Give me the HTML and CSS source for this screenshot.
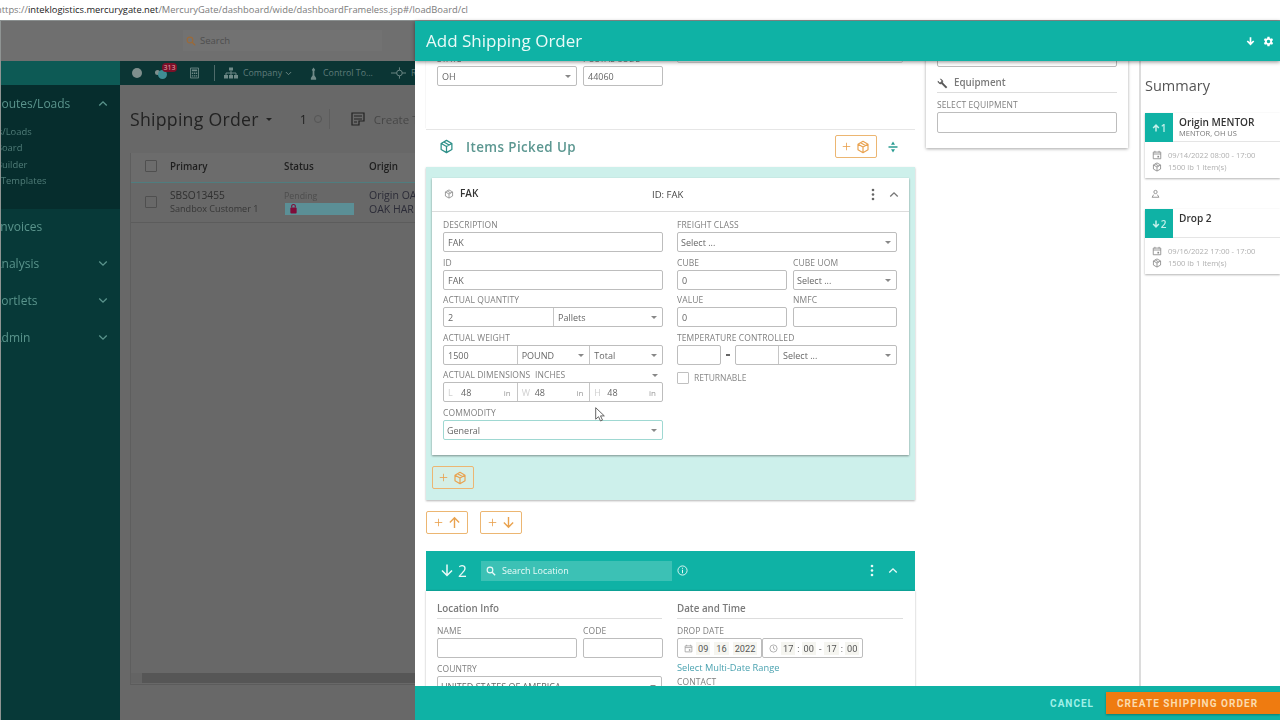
FILE: index.html
```html
<!DOCTYPE html>
<html lang="en">
<head>
  <meta charset="utf-8">
  <title>Add Shipping Order</title>
  <link rel="stylesheet" href="styles.css">
</head>
<body>
<svg class="defs" xmlns="http://www.w3.org/2000/svg">
  <symbol id="i-cube" viewBox="0 0 24 24"><path d="M12 2.2l8.6 4.9v9.8L12 21.8l-8.6-4.9V7.1z M3.6 7.2L12 12l8.4-4.8 M12 12v9.6 M7.8 4.7l8.4 4.9" fill="none" stroke="currentColor" stroke-width="2" stroke-linejoin="round"/></symbol>
  <symbol id="i-plus" viewBox="0 0 12 12"><path d="M6 1v10M1 6h10" fill="none" stroke="currentColor" stroke-width="1.1"/></symbol>
  <symbol id="i-up" viewBox="0 0 14 14"><path d="M7 13V2M2 7l5-5 5 5" fill="none" stroke="currentColor" stroke-width="1.5"/></symbol>
  <symbol id="i-down" viewBox="0 0 14 14"><path d="M7 1v11M2 7l5 5 5-5" fill="none" stroke="currentColor" stroke-width="1.5"/></symbol>
  <symbol id="i-up-bold" viewBox="0 0 14 14"><path d="M7 13V2M2 7l5-5 5 5" fill="none" stroke="currentColor" stroke-width="2.6"/></symbol>
  <symbol id="i-down-bold" viewBox="0 0 14 14"><path d="M7 1v11M2 7l5 5 5-5" fill="none" stroke="currentColor" stroke-width="2.6"/></symbol>
  <symbol id="i-chev-up" viewBox="0 0 12 8"><path d="M1.5 6.5L6 2l4.5 4.5" fill="none" stroke="currentColor" stroke-width="1.6"/></symbol>
  <symbol id="i-chev-down" viewBox="0 0 12 8"><path d="M1.5 1.5L6 6l4.5-4.5" fill="none" stroke="currentColor" stroke-width="1.6"/></symbol>
  <symbol id="i-dots" viewBox="0 0 4 16"><circle cx="2" cy="2.5" r="1.6" fill="currentColor"/><circle cx="2" cy="8" r="1.6" fill="currentColor"/><circle cx="2" cy="13.5" r="1.6" fill="currentColor"/></symbol>
  <symbol id="i-search" viewBox="0 0 12 12"><circle cx="4.8" cy="4.8" r="3.4" fill="none" stroke="currentColor" stroke-width="1.4"/><path d="M7.4 7.4L11 11" stroke="currentColor" stroke-width="1.6"/></symbol>
  <symbol id="i-info" viewBox="0 0 12 12"><circle cx="6" cy="6" r="5" fill="none" stroke="currentColor" stroke-width="1"/><path d="M6 5.2V9M6 3v1.2" stroke="currentColor" stroke-width="1.1"/></symbol>
  <symbol id="i-cal" viewBox="0 0 12 12"><path d="M1.5 2.5h9v8h-9z M1.5 4.8h9 M3.5 1v2 M8.5 1v2" fill="none" stroke="currentColor" stroke-width="1"/><rect x="6.5" y="7" width="2" height="2" fill="currentColor"/></symbol>
  <symbol id="i-clock" viewBox="0 0 12 12"><circle cx="6" cy="6" r="4.8" fill="none" stroke="currentColor"/><path d="M6 3v3.2l2.2 1.2" fill="none" stroke="currentColor"/></symbol>
  <symbol id="i-pin" viewBox="0 0 12 12"><circle cx="6" cy="4" r="2.2" fill="none" stroke="currentColor"/><path d="M3.5 7.5L1.5 11h9l-2-3.5" fill="none" stroke="currentColor"/></symbol>
  <symbol id="i-wrench" viewBox="0 0 12 12"><path d="M11 10L6.2 5.2c.5-1.5 0-3.6-2.6-4.2l1.6 2-.6 1.6-1.7.5L1 3.3c.2 2.6 2.4 3.6 4 3l4.600 4.700z" fill="currentColor" stroke="currentColor" stroke-width=".6"/></symbol>
  <symbol id="i-gear" viewBox="0 0 24 24"><path d="M19.4 13a7.600 7.600 0 0 0 0-2l2.100-1.600-2-3.500-2.500 1a7.500 7.500 0 0 0-1.700-1L15 3.300h-4l-.4 2.600a7.500 7.500 0 0 0-1.700 1l-2.500-1-2 3.500L6.500 11a7.600 7.600 0 0 0 0 2l-2.100 1.600 2 3.500 2.500-1a7.500 7.500 0 0 0 1.700 1l.4 2.600h4l.4-2.600a7.500 7.500 0 0 0 1.700-1l2.500 1 2-3.500zM13 15.200a3.200 3.200 0 1 1 0-6.400 3.200 3.200 0 0 1 0 6.400z" fill="currentColor" fill-rule="evenodd" transform="translate(-1 0)"/></symbol>
  <symbol id="i-expand" viewBox="0 0 10 12"><path d="M.5 6h9" stroke="currentColor" stroke-width="1.5"/><path d="M5 .5L3 3.800h4zM5 11.500L3 8.200h4z" fill="currentColor"/></symbol>
  <symbol id="i-org" viewBox="0 0 14 12"><path d="M5 .5h4v3H5zM0 8h4v3.500H0zM5 8h4v3.500H5zM10 8h4v3.500h-4z" fill="currentColor"/><path d="M7 3.500V8M2 8V6h10v2" fill="none" stroke="currentColor"/></symbol>
  <symbol id="i-tower" viewBox="0 0 8 14"><path d="M4 0l2 3-1 1v5l2 3v2H1v-2l2-3V4L2 3z" fill="currentColor"/></symbol>
  <symbol id="i-calc" viewBox="0 0 10 12"><path d="M.5.500h9v11h-9z" fill="none" stroke="currentColor"/><path d="M2 2h6v2H2zM2 5.500h1.500V7H2zM4.300 5.500h1.500V7H4.300zM6.500 5.500H8V7H6.500zM2 8.500h1.500V10H2zM4.300 8.500h1.500V10H4.300zM6.500 8.500H8V10H6.500z" fill="currentColor"/></symbol>
  <symbol id="i-net" viewBox="0 0 16 12"><circle cx="9" cy="6" r="3" fill="none" stroke="currentColor"/><path d="M0 6h6M12 6h4M9 0v3M9 9v3" stroke="currentColor"/></symbol>
  <symbol id="i-create" viewBox="0 0 14 14"><path d="M1 1h12v8H8v4H1z" fill="none" stroke="currentColor" stroke-width="1.2"/><path d="M3 4h8M3 7h8M3 10h3" stroke="currentColor"/></symbol>
  <symbol id="i-lock" viewBox="0 0 10 12"><path d="M3 5V3.500a2 2 0 0 1 4 0V5" fill="none" stroke="currentColor" stroke-width="1.200"/><rect x="1.500" y="5" width="7" height="6.500" rx="1" fill="currentColor"/></symbol>
  <symbol id="i-cursor" viewBox="0 0 10 15"><path d="M.7.700v11.500l2.800-2.500 2 4.300 2-.9-2-4.200h3.800z" fill="#fff" stroke="#555" stroke-width=".9"/></symbol>
</svg>

<div class="urlbar"><span class="url"><span class="url-rest">https://</span>inteklogistics.mercurygate.net<span class="url-rest">/MercuryGate/dashboard/wide/dashboardFrameless.jsp#/loadBoard/cl</span></span></div>

<div class="app">
  <div class="searchbar">
    <div class="searchbox"><svg class="ic-10 search-ic"><use href="#i-search"/></svg>Search</div>
  </div>
  <div class="side-cap"></div>
  <div class="nav">
    <span class="nav-dot"></span>
    <span class="nav-alert"><span class="nav-alert-dot"></span><span class="badge">313</span></span>
    <svg class="ic-calc"><use href="#i-calc"/></svg>
    <span class="nav-sep"></span>
    <svg class="ic-org"><use href="#i-org"/></svg><span class="nav-text">Company</span><svg class="ic-navchev"><use href="#i-chev-down"/></svg>
    <svg class="ic-tower"><use href="#i-tower"/></svg><span class="nav-text">Control To...</span>
    <svg class="ic-net"><use href="#i-net"/></svg><span class="nav-text">R</span>
  </div>
  <aside class="sidebar">
    <div class="side-open">
      <div class="side-item side-item-first">Routes/Loads<svg class="side-chev"><use href="#i-chev-up"/></svg></div>
      <div class="side-sub">Routes/Loads</div>
      <div class="side-sub">Load Board</div>
      <div class="side-sub">Load Builder</div>
      <div class="side-sub side-sub-last">Load Templates</div>
    </div>
    <div class="side-item side-invoices">Invoices</div>
    <div class="side-item">Analysis<svg class="side-chev"><use href="#i-chev-down"/></svg></div>
    <div class="side-item">Portlets<svg class="side-chev"><use href="#i-chev-down"/></svg></div>
    <div class="side-item">Admin<svg class="side-chev"><use href="#i-chev-down"/></svg></div>
  </aside>
  <main class="board">
    <div class="board-head">
      <h1 class="board-title">Shipping Order</h1>
      <span class="board-caret"></span>
      <span class="board-count">1</span>
      <span class="board-refresh"></span>
      <span class="board-sep"></span>
      <svg class="ic-create"><use href="#i-create"/></svg>
      <span class="board-create">Create T</span>
    </div>
    <div class="table">
      <div class="tr th">
        <span class="box"></span><span>Primary</span><span>Status</span><span>Origin</span>
      </div>
      <div class="tr td">
        <span class="box"></span>
        <div><div class="td-main">SBSO13455</div><div class="td-sub">Sandbox Customer 1</div></div>
        <div><div class="td-pending">Pending</div><div class="status-bar"><svg class="ic-lock"><use href="#i-lock"/></svg></div></div>
        <div class="td-origin"><div>Origin OA</div><div>OAK HAR</div></div>
      </div>
      <div class="hscroll"><span class="hscroll-arrow"></span><span class="hscroll-bar"></span></div>
    </div>
  </main>
</div>

<section class="drawer">
  <header class="drawer-head">
    <h2 class="drawer-title">Add Shipping Order</h2>
    <svg class="ic-head-down"><use href="#i-down-bold"/></svg>
    <svg class="ic-gear"><use href="#i-gear"/></svg>
  </header>

  <div class="drawer-main">
    <div class="form-pane">
      <div class="col-main">
        <div class="stop-top">
          <div class="two-col">
            <div class="pair">
              <div class="field"><label>STATE</label><div class="ctl">OH<i class="caret"></i></div></div>
              <div class="field"><label>POSTAL CODE</label><div class="ctl">44060</div></div>
            </div>
            <div class="clip-input"></div>
          </div>
        </div>

        <div class="items-head">
          <svg class="ic-items"><use href="#i-cube"/></svg>
          <h3 class="items-title">Items Picked Up</h3>
          <button class="add-btn add-btn-head"><svg class="ic-plus"><use href="#i-plus"/></svg><svg class="ic-addcube"><use href="#i-cube"/></svg></button>
          <svg class="ic-expand"><use href="#i-expand"/></svg>
        </div>

        <div class="items-body">
          <div class="item-card">
            <div class="item-head">
              <svg class="ic-itemcube"><use href="#i-cube"/></svg>
              <span class="item-name">FAK</span>
              <span class="item-id">ID: FAK</span>
              <svg class="ic-dots"><use href="#i-dots"/></svg>
              <svg class="ic-chev"><use href="#i-chev-up"/></svg>
            </div>
            <div class="item-form">
              <div class="item-col">
                <div class="field"><label>DESCRIPTION</label><div class="ctl">FAK</div></div>
                <div class="field"><label>ID</label><div class="ctl">FAK</div></div>
                <div class="field"><label>ACTUAL QUANTITY</label>
                  <div class="ctl-group"><div class="seg seg-half">2</div><div class="seg seg-half seg-sel">Pallets<i class="caret"></i></div></div>
                </div>
                <div class="field"><label>ACTUAL WEIGHT</label>
                  <div class="ctl-group"><div class="seg seg-third">1500</div><div class="seg seg-third seg-sel">POUND<i class="caret"></i></div><div class="seg seg-third seg-sel">Total<i class="caret"></i></div></div>
                </div>
                <div class="field"><label class="label-caret">ACTUAL DIMENSIONS&nbsp; INCHES<i class="caret"></i></label>
                  <div class="ctl-group">
                    <div class="seg seg-third seg-dim"><span class="dim-key">L</span>48<span class="dim-unit">in</span></div>
                    <div class="seg seg-third seg-dim"><span class="dim-key">W</span>48<span class="dim-unit">in</span></div>
                    <div class="seg seg-third seg-dim"><span class="dim-key">H</span>48<span class="dim-unit">in</span></div>
                  </div>
                </div>
                <div class="field"><label>COMMODITY</label><div class="ctl ctl-focus ctl-sel">General<i class="caret"></i></div></div>
              </div>
              <div class="item-col">
                <div class="field"><label>FREIGHT CLASS</label><div class="ctl ctl-sel">Select ...<i class="caret"></i></div></div>
                <div class="pair pair-item">
                  <div class="field"><label>CUBE</label><div class="ctl">0</div></div>
                  <div class="field"><label>CUBE UOM</label><div class="ctl ctl-sel">Select ...<i class="caret"></i></div></div>
                </div>
                <div class="pair pair-item">
                  <div class="field"><label>VALUE</label><div class="ctl">0</div></div>
                  <div class="field"><label>NMFC</label><div class="ctl"></div></div>
                </div>
                <div class="field"><label>TEMPERATURE CONTROLLED</label>
                  <div class="temp">
                    <div class="ctl temp-from"></div>
                    <span class="temp-dash"></span>
                    <div class="ctl-group temp-to"><div class="seg temp-val"></div><div class="seg seg-sel temp-unit">Select ...<i class="caret"></i></div></div>
                  </div>
                </div>
                <div class="check-row"><span class="box box-light"></span>RETURNABLE</div>
              </div>
            </div>
          </div>
          <button class="add-btn add-btn-item"><svg class="ic-plus"><use href="#i-plus"/></svg><svg class="ic-addcube"><use href="#i-cube"/></svg></button>
        </div>

        <div class="stop-actions">
          <button class="add-btn"><svg class="ic-plus"><use href="#i-plus"/></svg><svg class="ic-addarrow"><use href="#i-up"/></svg></button>
          <button class="add-btn"><svg class="ic-plus"><use href="#i-plus"/></svg><svg class="ic-addarrow"><use href="#i-down"/></svg></button>
        </div>

        <div class="stop-head">
          <svg class="ic-stop"><use href="#i-down"/></svg>
          <span class="stop-num">2</span>
          <div class="stop-search"><svg class="ic-stopsearch"><use href="#i-search"/></svg>Search Location</div>
          <svg class="ic-info"><use href="#i-info"/></svg>
          <svg class="ic-dots ic-dots-white"><use href="#i-dots"/></svg>
          <svg class="ic-chev ic-chev-white"><use href="#i-chev-up"/></svg>
        </div>
        <div class="stop-body">
          <div class="two-col">
            <div>
              <h4 class="sub-title">Location Info</h4>
              <div class="pair">
                <div class="field"><label>NAME</label><div class="ctl"></div></div>
                <div class="field"><label>CODE</label><div class="ctl"></div></div>
              </div>
              <div class="field"><label>COUNTRY</label><div class="ctl ctl-sel">UNITED STATES OF AMERICA<i class="caret"></i></div></div>
            </div>
            <div>
              <h4 class="sub-title">Date and Time</h4>
              <div class="field field-tight"><label>DROP DATE</label>
                <div class="datetime">
                  <div class="dt dt-date"><svg class="ic-dt"><use href="#i-cal"/></svg><span class="dt-part">09</span><span class="dt-part">16</span><span class="dt-part">2022</span></div>
                  <div class="dt dt-time"><svg class="ic-dt"><use href="#i-clock"/></svg><span class="dt-part">17</span>:<span class="dt-part">00</span><span class="dt-dash">-</span><span class="dt-part">17</span>:<span class="dt-part">00</span></div>
                </div>
              </div>
              <a class="multi-link">Select Multi-Date Range</a>
              <div class="field"><label>CONTACT</label></div>
            </div>
          </div>
        </div>
      </div>

      <div class="col-side">
        <div class="clip-input clip-input-side"></div>
        <h4 class="sub-title equip-title"><svg class="ic-wrench"><use href="#i-wrench"/></svg>Equipment</h4>
        <div class="field"><label>SELECT EQUIPMENT</label><div class="ctl ctl-tall"></div></div>
      </div>
    </div>

    <aside class="summary">
      <h3 class="summary-title">Summary</h3>
      <div class="sum-card">
        <div class="sum-head">
          <div class="sum-num"><svg class="ic-sum"><use href="#i-up-bold"/></svg>1</div>
          <div><div class="sum-name">Origin MENTOR</div><div class="sum-place">MENTOR, OH US</div></div>
        </div>
        <div class="sum-body">
          <div class="sum-row"><svg class="ic-sumrow"><use href="#i-cal"/></svg>09/14/2022 08:00 - 17:00</div>
          <div class="sum-row"><svg class="ic-sumrow"><use href="#i-cube"/></svg>1500 lb 1 Item(s)</div>
        </div>
      </div>
      <div class="sum-route"><svg class="ic-route"><use href="#i-pin"/></svg></div>
      <div class="sum-card">
        <div class="sum-head">
          <div class="sum-num"><svg class="ic-sum"><use href="#i-down-bold"/></svg>2</div>
          <div><div class="sum-name">Drop 2</div></div>
        </div>
        <div class="sum-body">
          <div class="sum-row"><svg class="ic-sumrow"><use href="#i-cal"/></svg>09/16/2022 17:00 - 17:00</div>
          <div class="sum-row"><svg class="ic-sumrow"><use href="#i-cube"/></svg>1500 lb 1 Item(s)</div>
        </div>
      </div>
    </aside>
  </div>

  <footer class="drawer-foot">
    <button class="btn-cancel">CANCEL</button>
    <button class="btn-create">CREATE SHIPPING ORDER</button>
  </footer>
</section>

<svg class="mouse"><use href="#i-cursor"/></svg>
</body>
</html>
```

FILE: styles.css
```css
html, body {
  margin: 0;
  padding: 0;
  width: 1280px;
  height: 720px;
  overflow: hidden;
}
body {
  position: relative;
  font-family: "Open Sans", sans-serif;
  background: #686868;
  color: #666;
  filter: blur(0.35px);
}
h1, h2, h3, h4 {
  margin: 0;
  font-weight: 400;
}
button {
  font-family: inherit;
  padding: 0;
  cursor: pointer;
}
svg {
  display: block;
  flex: none;
}
.defs {
  width: 0;
  height: 0;
  position: absolute;
}
.mouse {
  position: absolute;
  left: 595px;
  top: 407px;
  width: 10px;
  height: 15px;
}

/* browser bar */
.urlbar {
  height: 20px;
  background: #fff;
  border-bottom: 1px solid #8a8f8f;
  overflow: hidden;
  font-size: 9.35px;
  line-height: 20px;
  color: #222;
  white-space: nowrap;
}
.url {
  display: block;
  margin-left: -4px;
}
.url-rest {
  color: #7b7b7b;
}

/* page behind the drawer */
.app {
  display: grid;
  grid-template-columns: 119px 1fr;
  grid-template-rows: 40px 24px 1fr;
  height: 699px;
  border-left: 1px solid #8f9493;
}
.searchbar {
  grid-column: 1 / 3;
  background: #6f6f6f;
  padding: 9px 0 0 182px;
}
.searchbox {
  width: 199px;
  height: 21px;
  display: flex;
  align-items: center;
  gap: 4px;
  font-size: 9.5px;
  color: #4e4e4e;
  background: #727272;
}
.search-ic {
  color: #9a6a3a;
}
.ic-10 {
  width: 10px;
  height: 10px;
  margin-left: 3px;
}
.side-cap {
  background: #0d5a55;
}
.nav {
  background: #0b3534;
  display: flex;
  align-items: center;
  padding-left: 12px;
  color: #6f8a88;
  font-size: 8.8px;
  overflow: hidden;
  white-space: nowrap;
}
.nav-dot {
  width: 10px;
  height: 10px;
  border-radius: 50%;
  background: #7f8f8d;
  margin-right: 13px;
}
.nav-alert {
  position: relative;
  width: 14px;
  height: 12px;
  margin-right: 21px;
}
.nav-alert-dot {
  display: block;
  width: 9px;
  height: 9px;
  border-radius: 50%;
  background: #3f8d94;
  margin: 3px 0 0 3px;
  box-shadow: -5px -2px 0 -2px #7f8f8d;
}
.badge {
  position: absolute;
  left: 7px;
  top: -4px;
  width: 15px;
  height: 9px;
  border-radius: 4px;
  background: #7a1028;
  color: #e5a7b0;
  font-size: 7px;
  line-height: 9px;
  text-align: center;
}
.ic-calc {
  width: 9px;
  height: 12px;
  margin-right: 15px;
}
.nav-sep {
  width: 1px;
  height: 16px;
  background: #4e6b6a;
  margin-right: 9px;
}
.ic-org {
  width: 14px;
  height: 12px;
  margin-right: 5px;
}
.nav-text {
  color: #5f7c7a;
}
.ic-navchev {
  width: 7px;
  height: 5px;
  margin: 0 18px 0 3px;
}
.ic-tower {
  width: 7px;
  height: 13px;
  margin-right: 6px;
}
.ic-net {
  width: 15px;
  height: 12px;
  margin: 0 5px 0 18px;
}

.sidebar {
  background: #073938;
  overflow: hidden;
  color: #5a948c;
  font-size: 12px;
  position: relative;
}
.side-open {
  background: #062d2d;
  height: 123px;
  padding-top: 1px;
}
.side-item {
  display: flex;
  justify-content: space-between;
  align-items: center;
  height: 37px;
  margin-left: -7px;
  padding-right: 12px;
}
.side-item-first {
  height: 35px;
  margin-bottom: 3px;
}
.side-invoices {
  margin-left: -4px;
}
.side-open + .side-invoices {
  margin-top: -1px;
}
.side-chev {
  width: 10px;
  height: 7px;
}
.side-sub {
  font-size: 9.4px;
  line-height: 16.400px;
  color: #507c78;
  margin-left: -29px;
  white-space: nowrap;
}
.side-sub-last {
  margin-left: -24px;
}
.board {
  padding: 0 0 0 10px;
  overflow: hidden;
}
.board-head {
  display: flex;
  align-items: center;
  height: 24px;
  margin-top: 22px;
  color: #1f1f1f;
  white-space: nowrap;
}
.board-title {
  font-size: 17.700px;
  line-height: 24px;
  color: #222;
  letter-spacing: .25px;
}
.board-caret {
  border: 3px solid transparent;
  border-top: 3px solid #222;
  margin: 3px 0 0 7px;
}
.board-count {
  font-size: 12.500px;
  margin-left: 28px;
  color: #222;
}
.board-refresh {
  width: 6px;
  height: 6px;
  border: 1px solid #555;
  border-radius: 50%;
  margin-left: 7px;
}
.board-sep {
  width: 1px;
  height: 20px;
  background: #5d5d5d;
  margin-left: 7px;
}
.ic-create {
  width: 14px;
  height: 14px;
  margin-left: 21px;
  color: #222;
}
.board-create {
  font-size: 11.500px;
  margin-left: 9px;
  color: #474747;
}
.table {
  display: flex;
  flex-direction: column;
  height: 532px;
  margin-top: 22px;
  border-left: 1px solid #5e5e5e;
  border-bottom: 1px solid #5c5c5c;
  box-sizing: border-box;
}
.tr {
  display: grid;
  grid-template-columns: 39px 114px 85px 1fr;
  align-items: center;
}
.th {
  height: 26px;
  padding-bottom: 3px;
  background: #6c6c6c;
  border-bottom: 1px solid #4f7d7f;
  font-size: 9.800px;
  font-weight: 600;
  color: #1e1e1e;
}
.td {
  height: 38px;
  padding-bottom: 1px;
  border-bottom: 1px solid #5c5c5c;
  font-size: 10.200px;
  line-height: 14px;
}
.box {
  display: block;
  width: 10px;
  height: 10px;
  margin-left: 14px;
  border: 1px solid #4f4f4f;
  border-radius: 1px;
}
.td-main {
  color: #2f2f2f;
}
.td-sub {
  color: #363636;
  font-size: 9.100px;
}
.td-pending {
  color: #4d4d4d;
  font-size: 8.800px;
}
.status-bar {
  width: 69px;
  height: 12px;
  margin-left: 1px;
  background: #5b8f96;
  padding-left: 4px;
  box-sizing: border-box;
}
.ic-lock {
  width: 9px;
  height: 11px;
  color: #7f0c39;
}
.td-origin {
  color: #2b2b37;
  font-size: 10.500px;
}
.hscroll {
  display: flex;
  height: 10px;
  margin: auto 0 1px;
  background: #646464;
}
.hscroll-arrow {
  width: 11px;
}
.hscroll-bar {
  flex: 1;
  background: #565656;
}

/* drawer */
.drawer {
  position: absolute;
  left: 415px;
  top: 21px;
  right: 0;
  bottom: 0;
  display: flex;
  flex-direction: column;
  background: #fff;
}
.drawer-head {
  position: relative;
  z-index: 2;
  flex: none;
  height: 40px;
  display: flex;
  align-items: center;
  background: #0fb2a5;
  color: #fff;
  box-shadow: 0 1px 4px rgba(0, 0, 0, .45);
  padding: 0 5px 0 11px;
}
.drawer-title {
  flex: 1;
  margin-top: -2px;
  font-size: 17px;
  color: #eafaf8;
}
.ic-head-down {
  width: 9px;
  height: 10px;
  margin-right: 7px;
}
.ic-gear {
  width: 13px;
  height: 13px;
}
.drawer-main {
  flex: 1;
  min-height: 0;
  display: flex;
  overflow: hidden;
}
.form-pane {
  width: 724px;
  flex: none;
  display: flex;
  gap: 11px;
  padding: 0 0 0 11px;
  box-sizing: border-box;
  align-items: flex-start;
}
.col-main {
  width: 489px;
  flex: none;
  margin-top: -13px;
}
.col-side {
  width: 202px;
  flex: none;
  margin-top: -13px;
  padding: 0 11px 11px;
  box-sizing: border-box;
  background: #fff;
  box-shadow: 0 1px 3px rgba(0, 0, 0, .35);
}

/* form bits */
.field {
  margin-bottom: 3.600px;
}
.field label {
  display: block;
  height: 14px;
  font-size: 8.500px;
  line-height: 14px;
  color: #808080;
  letter-spacing: .1px;
  white-space: nowrap;
}
.ctl {
  position: relative;
  height: 20px;
  box-sizing: border-box;
  border: 1px solid #bdbdbd;
  border-radius: 2px;
  padding: 0 4px;
  font-size: 9px;
  line-height: 19px;
  color: #666;
  background: #fff;
  white-space: nowrap;
  overflow: hidden;
}
.ctl-sel {
  padding-left: 3px;
}
.ctl-focus {
  border-color: #9fd8d2;
}
.ctl-tall {
  height: 21px;
}
.caret {
  position: absolute;
  right: 5px;
  top: 8px;
  border: 3px solid transparent;
  border-top: 3px solid #888;
  border-bottom: 0;
}
.label-caret .caret {
  top: 6px;
}
.two-col {
  display: grid;
  grid-template-columns: 225px 226px;
  gap: 15px;
}
.pair {
  display: grid;
  grid-template-columns: 140px 80px;
  gap: 6px;
}
.stop-top {
  height: 77px;
  padding: 4px 12px 0 11px;
  background: #fff;
  box-shadow: -1px 0 1px -1px rgba(0, 0, 0, .2);
}
.clip-input {
  height: 11px;
  box-sizing: border-box;
  border: 1px solid #d5d5d5;
  border-radius: 2px;
}
.clip-input-side {
  height: 19px;
  border-color: #bbb;
}

/* items */
.items-head {
  height: 38px;
  display: flex;
  align-items: center;
  border-top: 1px solid #e6e6e6;
  box-sizing: border-box;
  padding: 0 17px 4px 13px;
}
.ic-items {
  width: 15px;
  height: 15px;
  color: #2d8f88;
}
.items-title {
  flex: 1;
  margin-left: 12px;
  font-size: 13.400px;
  font-weight: 600;
  letter-spacing: .4px;
  color: #5c9791;
}
.add-btn {
  display: flex;
  align-items: center;
  justify-content: center;
  gap: 5px;
  width: 42px;
  height: 23px;
  box-sizing: border-box;
  border: 1px solid #ecb672;
  border-radius: 2px;
  background: transparent;
  color: #e9a24f;
}
.add-btn-head {
  margin-right: 11px;
}
.add-btn-item {
  margin-top: 11px;
  background: #d5efe6;
}
.ic-plus {
  width: 9px;
  height: 9px;
}
.ic-addcube {
  width: 14px;
  height: 14px;
}
.ic-addarrow {
  width: 13px;
  height: 13px;
}
.ic-expand {
  width: 10px;
  height: 12px;
  color: #2a9c92;
}
.items-body {
  height: 333px;
  box-sizing: border-box;
  background: #cdf0eb;
  padding: 11px 6px 0;
  box-shadow: 0 1px 2px rgba(0, 0, 0, .3);
}
.item-card {
  height: 277px;
  background: #fff;
  box-shadow: 0 1px 2px rgba(0, 0, 0, .4);
}
.item-head {
  height: 34px;
  box-sizing: border-box;
  display: flex;
  align-items: center;
  padding: 0 10px 0 12px;
  border-bottom: 1px solid #dcdcdc;
}
.ic-itemcube {
  width: 10px;
  height: 10px;
  margin-bottom: 2px;
  color: #8b8b8b;
}
.item-name {
  width: 192px;
  margin: 0 0 3px 6px;
  font-size: 10px;
  font-weight: 600;
  color: #333;
}
.item-id {
  flex: 1;
  font-size: 9.500px;
  color: #444;
}
.ic-dots {
  width: 4px;
  height: 13px;
  color: #666;
  margin-right: 14px;
}
.ic-chev {
  width: 10px;
  height: 7px;
  color: #777;
}
.ic-dots-white,
.ic-chev-white {
  color: #eafaf8;
}
.item-form {
  display: grid;
  grid-template-columns: 220px 220px;
  gap: 14px;
  padding: 6px 0 0 11px;
}
.pair-item {
  grid-template-columns: 110px 104px;
}
.ctl-group {
  display: flex;
  height: 20px;
  box-sizing: border-box;
  border: 1px solid #bdbdbd;
  border-radius: 2px;
  background: #fff;
}
.seg {
  position: relative;
  box-sizing: border-box;
  border-left: 1px solid #c6c6c6;
  padding: 0 4px;
  font-size: 9px;
  line-height: 19px;
  white-space: nowrap;
  color: #666;
}
.seg:first-child {
  border-left: 0;
}
.seg-half {
  width: 50%;
}
.seg-third {
  width: 33.400%;
}
.seg-dim {
  display: flex;
  padding: 0 6px 0 4px;
}
.dim-key {
  width: 13px;
  color: #d0d0d0;
}
.dim-unit {
  margin-left: auto;
  color: #999;
  font-size: 8px;
}
.label-caret {
  position: relative;
}
.temp {
  display: flex;
  align-items: center;
}
.temp-from {
  width: 44px;
}
.temp-dash {
  width: 4px;
  height: 1.500px;
  background: #666;
  margin: 0 5px;
}
.temp-to {
  flex: 1;
}
.temp-val {
  width: 42px;
}
.temp-unit {
  flex: 1;
}
.check-row {
  display: flex;
  align-items: center;
  gap: 5px;
  margin-top: 7px;
  font-size: 8.500px;
  color: #888;
}
.box-light {
  margin: 0;
  border-color: #c0c0c0;
}

/* stop 2 */
.stop-actions {
  display: flex;
  gap: 12px;
  margin-top: 11px;
}
.stop-head {
  display: flex;
  align-items: center;
  height: 39px;
  margin-top: 17px;
  padding: 0 17px 1px 14px;
  background: #0fb2a5;
  color: #eafaf8;
}
.ic-stop {
  width: 14px;
  height: 15px;
}
.stop-num {
  width: 23px;
  margin-left: 4px;
  font-size: 15.500px;
  font-weight: 500;
}
.stop-search {
  display: flex;
  align-items: center;
  gap: 6px;
  width: 191px;
  height: 20px;
  padding-left: 5px;
  box-sizing: border-box;
  background: #3cc1b5;
  font-size: 9px;
}
.ic-stopsearch {
  width: 10px;
  height: 10px;
}
.ic-info {
  width: 11px;
  height: 11px;
  margin: 0 auto 0 5px;
}
.stop-body {
  height: 120px;
  overflow: hidden;
  padding: 11px 12px 0 11px;
  box-shadow: 0 0 2px rgba(0, 0, 0, .3);
}
.sub-title {
  font-size: 9.800px;
  font-weight: 600;
  line-height: 14px;
  padding-bottom: 2px;
  margin-bottom: 5px;
  border-bottom: 1px solid #ddd;
  color: #7a7a7a;
}
.datetime {
  display: flex;
}
.dt {
  display: flex;
  align-items: center;
  height: 20px;
  box-sizing: border-box;
  border: 1px solid #bdbdbd;
  border-radius: 2px;
  padding-left: 6px;
  font-family: Roboto, sans-serif;
  font-size: 9.200px;
  color: #555;
}
.dt-date {
  width: 85px;
  gap: 2px;
}
.dt-date .dt-part + .dt-part {
  margin-left: 2px;
}
.dt-time {
  width: 101px;
  gap: 2px;
}
.dt-dash {
  margin: 0 1px;
}
.ic-dt {
  width: 9px;
  height: 9px;
  color: #999;
  margin-right: 1px;
}
.dt-part {
  background: #f5f5f0;
  padding: 1px 2px;
}
.field-tight {
  margin-bottom: 3px;
}
.multi-link {
  display: block;
  font-size: 9.250px;
  line-height: 14px;
  color: #4aa2b0;
}
.equip-title {
  display: flex;
  align-items: center;
  gap: 6px;
  margin-top: 9px;
  margin-bottom: 5px;
}
.ic-wrench {
  width: 11px;
  height: 11px;
  color: #555;
}

/* summary */
.summary {
  flex: 1;
  border-left: 2px solid #dcdcdc;
  padding-left: 4px;
  box-sizing: border-box;
}
.summary-title {
  margin: 15px 0 17px;
  font-size: 14.500px;
  line-height: 20px;
  color: #555;
}
.sum-card {
  height: 65px;
  box-shadow: 0 1px 2px rgba(0, 0, 0, .3);
}
.sum-head {
  display: flex;
  height: 29px;
  gap: 6px;
  border-bottom: 1px solid #e5e5e5;
  box-sizing: border-box;
}
.sum-num {
  display: flex;
  align-items: center;
  justify-content: center;
  gap: 1px;
  width: 28px;
  height: 29px;
  flex: none;
  background: #0fb2a5;
  color: #c4f0ea;
  font-size: 10px;
  font-weight: 600;
}
.ic-sum {
  width: 8px;
  height: 8px;
}
.sum-name {
  font-size: 10.100px;
  font-weight: 600;
  line-height: 13px;
  margin-top: 3px;
  color: #333;
  white-space: nowrap;
}
.sum-place {
  font-size: 7.500px;
  line-height: 9px;
  color: #777;
}
.sum-body {
  padding: 7px 0 0 7px;
}
.sum-row {
  display: flex;
  align-items: center;
  gap: 6px;
  height: 12px;
  font-size: 7.600px;
  color: #b0b0b0;
  white-space: nowrap;
}
.ic-sumrow {
  width: 10px;
  height: 10px;
  color: #888;
}
.sum-route {
  height: 31px;
  display: flex;
  align-items: center;
  padding-left: 6px;
}
.ic-route {
  width: 9px;
  height: 9px;
  color: #777;
}

/* footer */
.drawer-foot {
  position: relative;
  z-index: 2;
  flex: none;
  height: 34px;
  display: flex;
  align-items: center;
  justify-content: flex-end;
  background: #0fb2a5;
}
.btn-cancel {
  border: 0;
  background: none;
  margin-right: 12px;
  font-family: Roboto, sans-serif;
  font-size: 10px;
  font-weight: 700;
  letter-spacing: 1px;
  color: #9ff0e8;
}
.btn-create {
  width: 174px;
  height: 22px;
  border: 0;
  text-align: left;
  padding-left: 11px;
  background: #ef7b10;
  box-shadow: 0 1px 2px rgba(0, 0, 0, .3);
  font-family: Roboto, sans-serif;
  font-size: 10px;
  font-weight: 700;
  letter-spacing: 1.05px;
  color: #fbdcae;
}
```
